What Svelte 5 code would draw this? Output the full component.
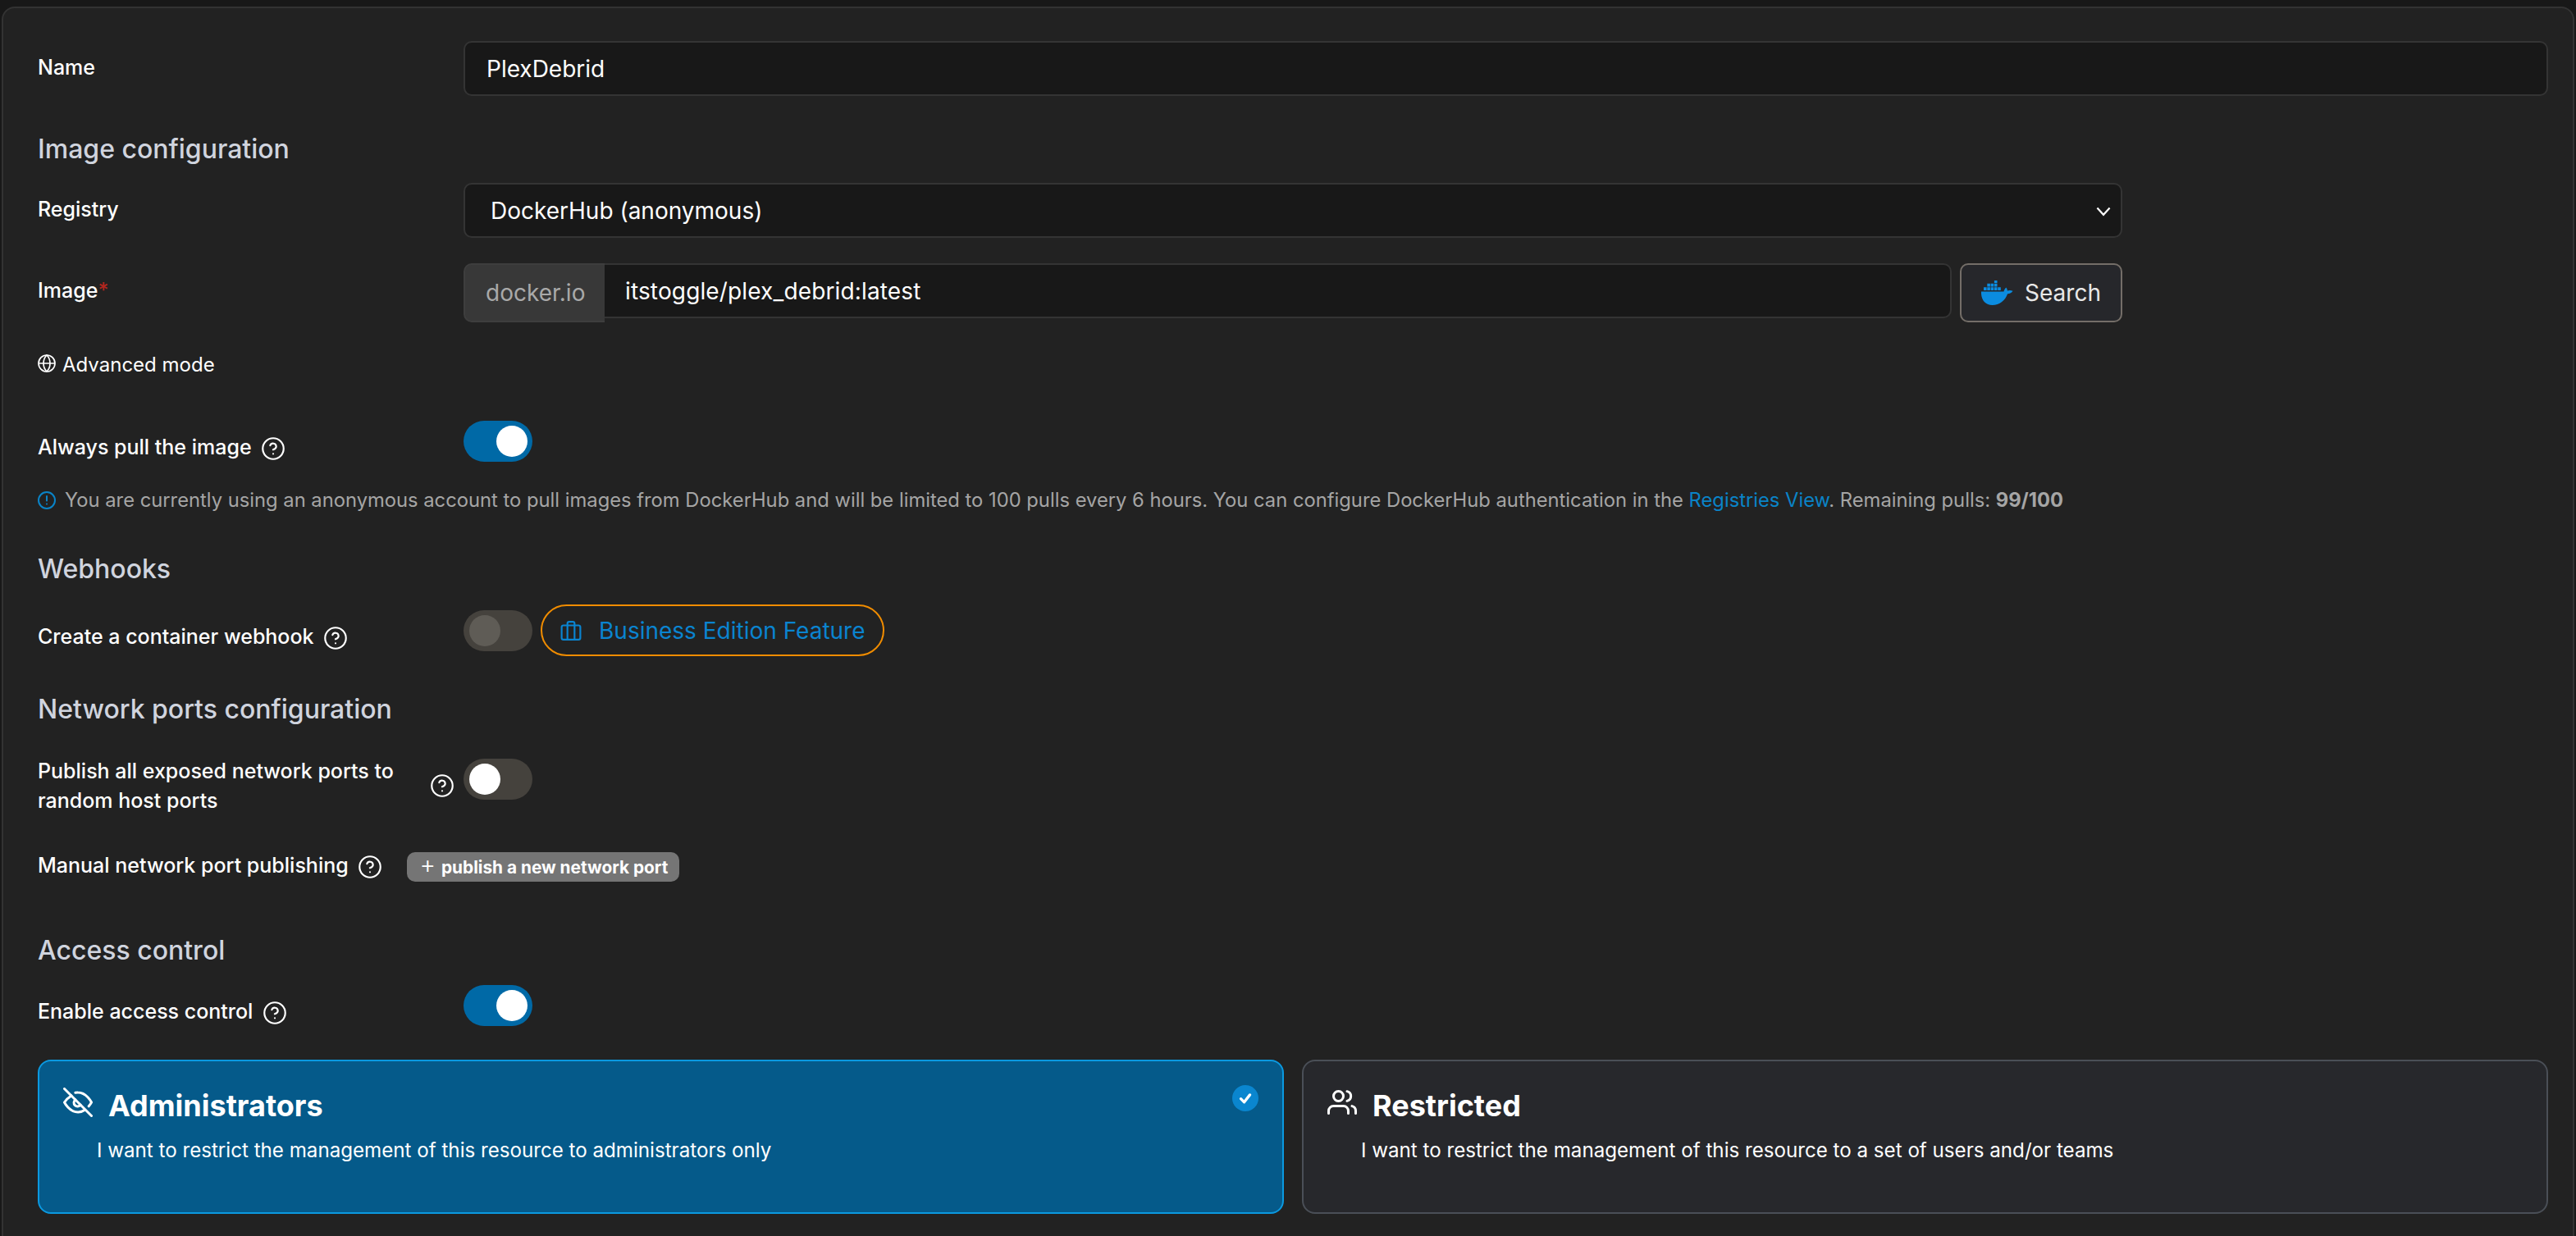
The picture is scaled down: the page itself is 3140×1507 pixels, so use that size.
<script>
  const helpPath = 'M9.1 9a3 3 0 0 1 5.8 1c0 2-3 3-3 3M12 17h.01';
</script>

{#snippet help()}
  <svg class="help" viewBox="1 1 22 22" fill="none" stroke="currentColor" stroke-linecap="round" stroke-linejoin="round">
    <circle cx="12" cy="12" r="10" />
    <path d={helpPath} />
  </svg>
{/snippet}

<div class="page">
  <div class="panel">
    <div class="row row-name">
      <div class="label high">Name</div>
      <div class="field input">PlexDebrid</div>
    </div>

    <h2 class="title t-image">Image configuration</h2>

    <div class="row row-registry">
      <div class="label high">Registry</div>
      <div class="narrow">
        <div class="field select">
          <span>DockerHub (anonymous)</span>
          <svg class="chevron" viewBox="0 0 16 16" fill="none" stroke="currentColor" stroke-width="1.6"><path d="M2.5 5.5 8 11.5l5.5-6" /></svg>
        </div>
      </div>
    </div>

    <div class="row row-image">
      <div class="label higher">Image<span class="req">*</span></div>
      <div class="narrow image-group">
        <div class="addon">docker.io</div>
        <div class="field image-input">itstoggle/plex_debrid:latest</div>
        <button class="search">
          <svg class="whale" viewBox="0 0 40 30">
            <path fill="#0b8ce0" d="M0 13.500h27.500c.4-2 1.600-3.700 2.800-5 1 1.200 1.500 2.500 1.600 3.900 2-.8 4.400-.7 6.600.4-1.300 2.300-3.600 3.500-6.400 3.500C29.500 24 22.500 30 13.500 30 5 30-.5 23.500 0 13.500z" />
            <path fill="#0b8ce0" d="M3 8.200h3.600v3.900H3zM7.300 8.200h3.600v3.900H7.300zM11.600 8.200h3.600v3.900h-3.600zM15.900 8.200h3.600v3.900h-3.600zM20.200 8.200h3.600v3.900h-3.600zM7.300 3.700h3.600v3.800H7.300zM11.600 3.700h3.600v3.800h-3.600zM15.900 3.700h3.600v3.800h-3.600zM15.900 0h3.600v3h-3.600z" />
          </svg>
          <span>Search</span>
        </button>
      </div>
    </div>

    <div class="advanced">
      <svg class="globe" viewBox="1 1 22 22" fill="none" stroke="currentColor" stroke-width="1.700">
        <circle cx="12" cy="12" r="10" />
        <path d="M2 12h20M12 2c3 3 4 6.500 4 10s-1 7-4 10c-3-3-4-6.500-4-10s1-7 4-10z" />
      </svg>
      <span>Advanced mode</span>
    </div>

    <div class="row row-pull">
      <div class="label low">Always pull the image {@render help()}</div>
      <div class="toggle on"></div>
    </div>

    <p class="info">
      <svg class="info-icon" viewBox="1 1 22 22" fill="none" stroke="currentColor" stroke-width="2" stroke-linecap="round">
        <circle cx="12" cy="12" r="10" />
        <path d="M12 7v5.500M12 16.500h.01" />
      </svg>
      <span>You are currently using an anonymous account to pull images from DockerHub and will be limited to 100 pulls every 6 hours. You can configure DockerHub authentication in the <span class="link">Registries View</span>. Remaining pulls: <b>99/100</b></span>
    </p>

    <h2 class="title t-webhooks">Webhooks</h2>

    <div class="row row-webhook">
      <div class="label low">Create a container webhook {@render help()}</div>
      <div class="toggle disabled"></div>
      <div class="be-pill">
        <svg class="briefcase" viewBox="0 0 24 24" fill="none" stroke="currentColor" stroke-width="2" stroke-linejoin="round" stroke-linecap="round">
          <rect x="1.500" y="6" width="21" height="16" rx="2" />
          <path d="M8 22V4a2 2 0 0 1 2-2h4a2 2 0 0 1 2 2v18" />
        </svg>
        <span>Business Edition Feature</span>
      </div>
    </div>

    <h2 class="title t-ports">Network ports configuration</h2>

    <div class="row row-publish">
      <div class="label publish-label">
        <span class="publish-text">Publish all exposed network ports to random host ports</span>
        {@render help()}
      </div>
      <div class="toggle"></div>
    </div>

    <div class="manual">
      <div class="label">Manual network port publishing {@render help()}</div>
      <div class="port-btn"><span class="plus">+</span> publish a new network port</div>
    </div>

    <h2 class="title t-access">Access control</h2>

    <div class="row row-enable">
      <div class="label low">Enable access control {@render help()}</div>
      <div class="toggle on"></div>
    </div>

    <div class="cards">
      <div class="card selected">
        <span class="check">
          <svg viewBox="0 0 16 16" fill="none" stroke="#fff" stroke-width="2.400" stroke-linecap="round" stroke-linejoin="round"><path d="M4 8.500 7 11.500 12 5" /></svg>
        </span>
        <div class="card-head">
          <svg class="card-icon" viewBox="0 0 24 24" fill="none" stroke="currentColor" stroke-width="2" stroke-linecap="round" stroke-linejoin="round">
            <path d="M9.900 4.200A9 9 0 0 1 12 4c7 0 11 8 11 8a18.500 18.500 0 0 1-2.200 3.200M6.600 6.600A18.500 18.500 0 0 0 1 12s4 8 11 8a9 9 0 0 0 5.400-1.600" />
            <path d="M14.100 14.100a3 3 0 1 1-4.200-4.200" />
            <path d="M1 1l22 22" />
          </svg>
          <span class="card-title">Administrators</span>
        </div>
        <div class="card-desc">I want to restrict the management of this resource to administrators only</div>
      </div>
      <div class="card">
        <div class="card-head">
          <svg class="card-icon" viewBox="0 0 24 24" fill="none" stroke="currentColor" stroke-width="2" stroke-linecap="round" stroke-linejoin="round">
            <path d="M17 21v-2a4 4 0 0 0-4-4H5a4 4 0 0 0-4 4v2" />
            <circle cx="9" cy="7" r="4" />
            <path d="M23 21v-2a4 4 0 0 0-3-3.900M16 3.100a4 4 0 0 1 0 7.800" />
          </svg>
          <span class="card-title">Restricted</span>
        </div>
        <div class="card-desc">I want to restrict the management of this resource to a set of users and/or teams</div>
      </div>
    </div>
  </div>
</div>

<style>
  :global(body) {
    margin: 0;
    background: #181818;
  }

  .page {
    height: 1507px;
    padding: 8px 2px 0;
    box-sizing: border-box;
    overflow: hidden;
    font-family: Inter, "Liberation Sans", sans-serif;
    color: #fff;
  }

  .panel {
    box-sizing: border-box;
    height: 1520px;
    padding: 40px 30px 0 42px;
    background: #222222;
    border: 2px solid #333333;
    border-radius: 16px;
  }

  .row {
    display: flex;
    align-items: center;
  }

  .label {
    flex: 0 0 519px;
    box-sizing: border-box;
    font-size: 25px;
    font-weight: 500;
    line-height: 36px;
    color: #fff;
  }

  .low {
    padding-top: 14px;
  }

  .high {
    padding-bottom: 3px;
  }

  .higher {
    padding-bottom: 7px;
  }

  .req {
    color: #b3261e;
  }

  .help {
    width: 28px;
    height: 28px;
    margin-left: 6px;
    vertical-align: -7px;
    stroke-width: 1.700;
  }

  .field {
    box-sizing: border-box;
    display: flex;
    align-items: center;
    background: #181818;
    border: 2px solid #343434;
    border-radius: 10px;
    font-size: 28px;
    color: #fff;
  }

  .input {
    flex: 1;
    height: 67px;
    padding: 0 26px;
  }

  .title {
    margin: 0;
    font-size: 32px;
    font-weight: 500;
    line-height: 40px;
    color: #d0d4de;
  }

  .t-image {
    margin-top: 45px;
  }

  .row-registry {
    margin-top: 21px;
  }

  .narrow {
    width: 2022px;
  }

  .select {
    height: 67px;
    padding: 0 10px 0 31px;
    justify-content: space-between;
  }

  .chevron {
    width: 22px;
    height: 22px;
  }

  .row-image {
    margin-top: 31px;
  }

  .image-group {
    display: flex;
    align-items: flex-start;
  }

  .addon {
    box-sizing: border-box;
    flex: 0 0 172px;
    height: 72px;
    padding-left: 25px;
    display: flex;
    align-items: center;
    background: #383838;
    border: 2px solid #3e3e3e;
    border-right: 0;
    border-radius: 10px 0 0 10px;
    font-size: 28px;
    color: #a9a9a9;
  }

  .image-input {
    flex: 1;
    height: 67px;
    padding-left: 25px;
    border-left: 0;
    border-radius: 0 10px 10px 0;
    letter-spacing: 0.140px;
  }

  .search {
    box-sizing: border-box;
    flex: 0 0 198px;
    height: 72px;
    margin-left: 10px;
    display: flex;
    align-items: center;
    justify-content: center;
    gap: 13px;
    background: #26272b;
    border: 2px solid #746e68;
    border-radius: 10px;
    font: inherit;
    font-size: 28px;
    color: #e8e8e8;
    padding: 0;
  }

  .whale {
    width: 40px;
    height: 30px;
  }

  .advanced {
    display: flex;
    align-items: center;
    gap: 8px;
    margin-top: 34px;
    font-size: 24px;
    font-weight: 400;
    line-height: 36px;
  }

  .globe {
    width: 22px;
    height: 22px;
    margin-top: -4px;
  }

  .row-pull {
    margin-top: 50px;
  }

  .toggle {
    position: relative;
    flex: 0 0 84px;
    height: 50px;
    border-radius: 25px;
    background: #45423d;
  }

  .toggle::after {
    content: "";
    position: absolute;
    top: 6px;
    left: 7px;
    width: 38px;
    height: 38px;
    border-radius: 50%;
    background: #fff;
  }

  .toggle.on {
    background: #0069a6;
  }

  .toggle.on::after {
    left: 40px;
  }

  .toggle.disabled::after {
    background: #5f5c56;
  }

  .info {
    display: flex;
    align-items: center;
    gap: 11px;
    margin: 29px 0 0;
    font-size: 23.750px;
    line-height: 36px;
    color: #a5a5a5;
  }

  .info-icon {
    flex: none;
    width: 22px;
    height: 22px;
    color: #0a84c8;
  }

  .link {
    color: #0a84c8;
  }

  .info b {
    font-weight: 700;
  }

  .t-webhooks {
    margin-top: 46px;
  }

  .row-webhook {
    margin-top: 23px;
  }

  .be-pill {
    box-sizing: border-box;
    display: flex;
    align-items: center;
    gap: 21px;
    height: 63px;
    margin-left: 10px;
    padding: 0 21px 0 22px;
    border: 2px solid #f08c00;
    border-radius: 32px;
    font-size: 28px;
    color: #0a84d0;
  }

  .briefcase {
    width: 26px;
    height: 26px;
  }

  .t-ports {
    margin-top: 45px;
  }

  .row-publish {
    align-items: flex-start;
    margin-top: 37px;
  }

  .row-publish .toggle {
    margin-top: 3px;
  }

  .publish-label {
    display: flex;
    align-items: center;
  }

  .publish-text {
    width: 473px;
  }

  .manual {
    display: flex;
    align-items: flex-start;
    margin-top: 43px;
  }

  .manual .label {
    flex: none;
  }

  .port-btn {
    display: flex;
    align-items: center;
    gap: 7px;
    height: 36px;
    margin: 2px 0 0 31px;
    padding: 0 14px 0 15px;
    background: #757575;
    border-radius: 10px;
    font-size: 20.800px;
    font-weight: 700;
    color: #fff;
  }

  .plus {
    font-weight: 300;
    font-size: 30px;
    margin-top: -6px;
  }

  .t-access {
    margin-top: 64px;
  }

  .row-enable {
    margin-top: 22px;
  }

  .cards {
    display: grid;
    grid-template-columns: 1fr 1fr;
    gap: 22px;
    margin-top: 41px;
  }

  .card {
    position: relative;
    box-sizing: border-box;
    height: 188px;
    padding: 30px 29px 0;
    background: #27282c;
    border: 2px solid #4a4f57;
    border-radius: 16px;
  }

  .card.selected {
    background: #055a8a;
    border-color: #0b99e0;
  }

  .check {
    position: absolute;
    top: 29px;
    right: 29px;
    width: 32px;
    height: 32px;
    border-radius: 50%;
    background: #0a86cf;
    display: flex;
    align-items: center;
    justify-content: center;
  }

  .check svg {
    width: 22px;
    height: 22px;
  }

  .card-head {
    display: flex;
    align-items: center;
    gap: 19px;
  }

  .card-icon {
    width: 36px;
    height: 36px;
    margin-top: -8px;
  }

  .card-title {
    font-size: 36px;
    font-weight: 700;
    line-height: 48px;
  }

  .card-desc {
    margin: 13px 0 0 41px;
    font-size: 24.150px;
    line-height: 36px;
    color: #fff;
  }
</style>
